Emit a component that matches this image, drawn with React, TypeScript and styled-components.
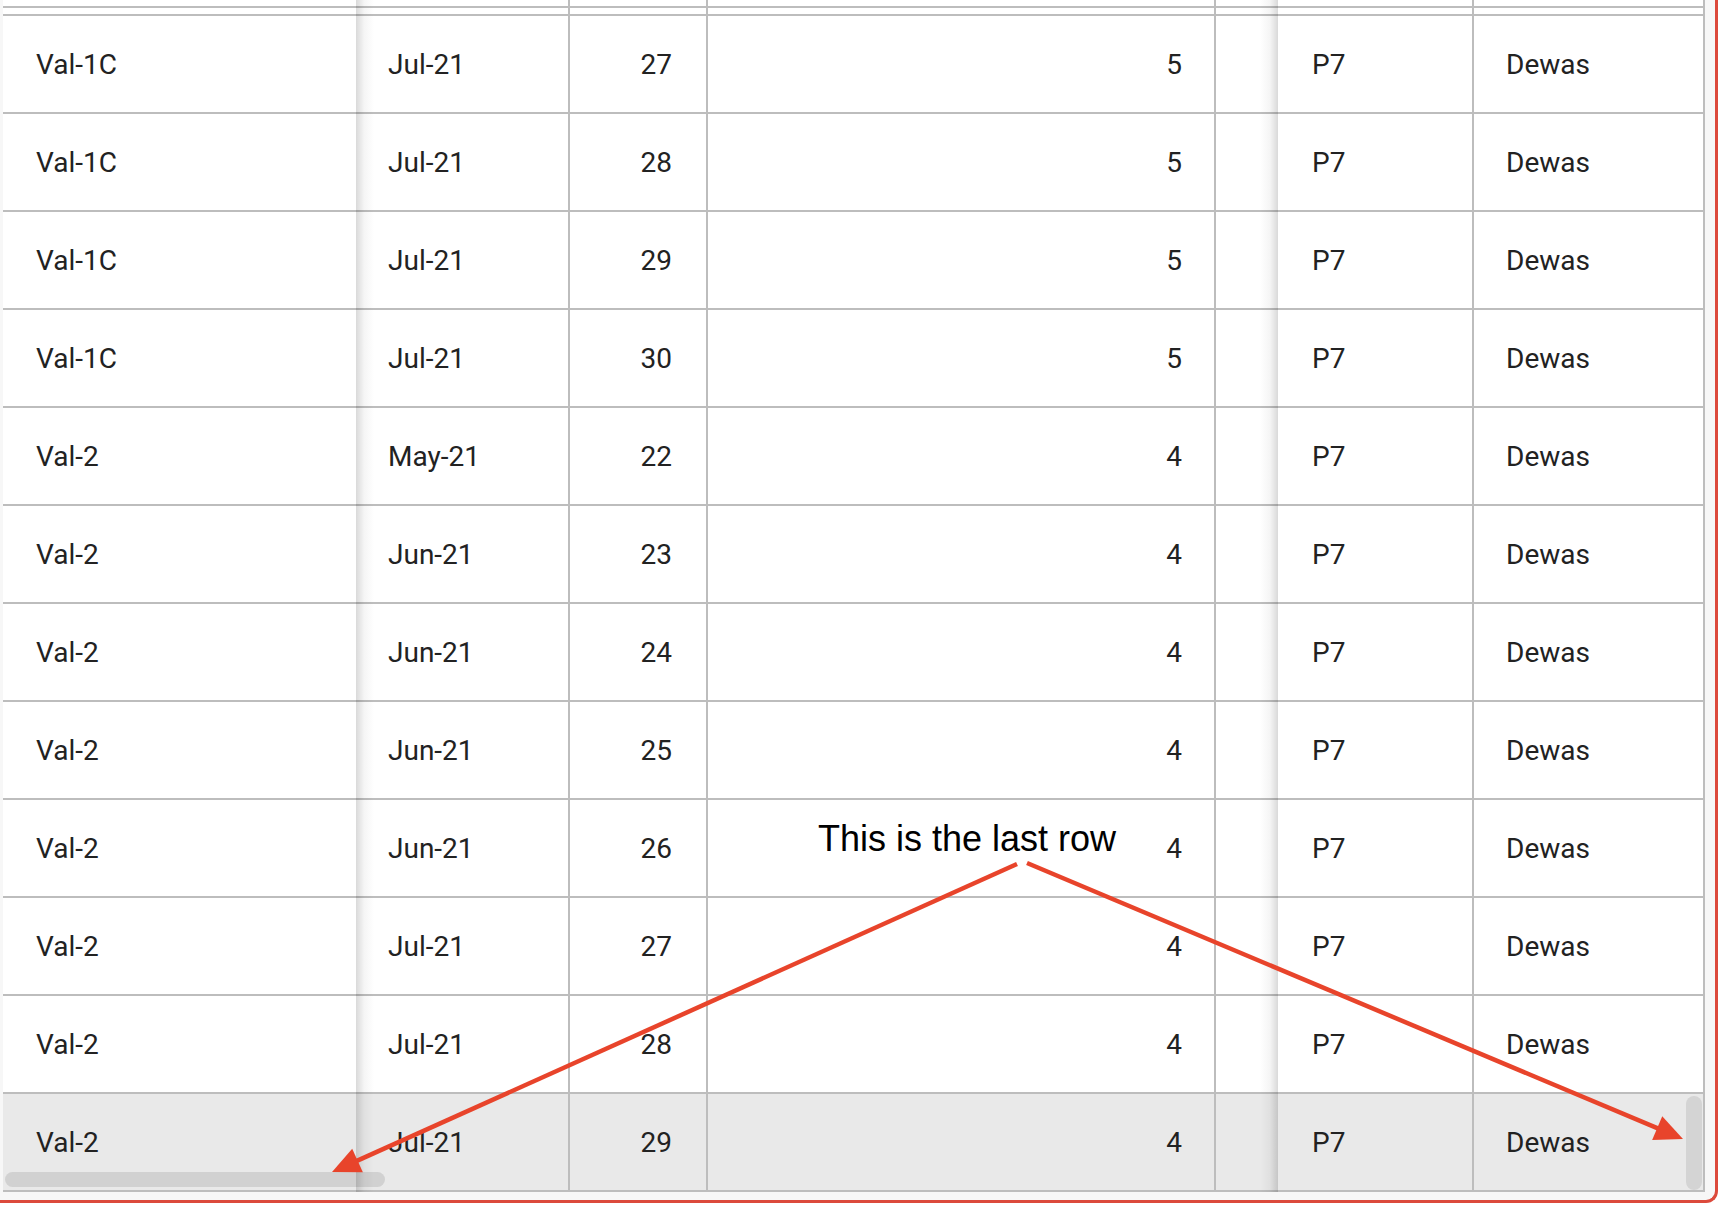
import React from 'react';
import styled, { createGlobalStyle, css } from 'styled-components';

const GlobalStyle = createGlobalStyle`
  html, body {
    margin: 0;
    padding: 0;
    background: #ffffff;
  }
  body {
    font-family: Roboto, "Noto Sans", sans-serif;
  }
`;

const LINE = '#bdbdbd';

const Page = styled.div`
  position: relative;
  width: 1720px;
  height: 1206px;
  overflow: hidden;
`;

const Frame = styled.div`
  width: 1718px;
  height: 1203px;
  box-sizing: border-box;
  padding: 0 10px 8px 3px;
  background: #f7f7f7;
  border-right: 3px solid #dc4a3c;
  border-bottom: 3px solid #dc4a3c;
  border-bottom-right-radius: 12px;
  overflow: hidden;
`;

const Grid = styled.div`
  position: relative;
  display: flex;
  width: 1702px;
  height: 1192px;
  box-sizing: border-box;
  border-right: 2px solid ${LINE};
  background: #ffffff;
  overflow: hidden;
  font-family: Roboto, "Noto Sans", sans-serif;
  font-size: 28px;
  color: #222222;
`;

const Section = styled.div<{ $width: number; $pin?: 'left' | 'right' }>`
  position: relative;
  flex: 0 0 ${({ $width }) => $width}px;
  display: flex;
  flex-direction: column;
  z-index: ${({ $pin }) => ($pin ? 2 : 1)};

  ${({ $pin }) =>
    $pin === 'left' &&
    css`
      &::after {
        content: '';
        position: absolute;
        top: 0;
        bottom: 0;
        right: -18px;
        width: 18px;
        background: linear-gradient(to right, rgba(0, 0, 0, 0.15), rgba(0, 0, 0, 0.04) 45%, rgba(0, 0, 0, 0));
        pointer-events: none;
      }
    `}

  ${({ $pin }) =>
    $pin === 'right' &&
    css`
      &::before {
        content: '';
        position: absolute;
        top: 0;
        bottom: 0;
        left: -18px;
        width: 18px;
        background: linear-gradient(to left, rgba(0, 0, 0, 0.15), rgba(0, 0, 0, 0.04) 45%, rgba(0, 0, 0, 0));
        pointer-events: none;
      }
    `}
`;

const Row = styled.div<{ $height: number; $hover?: boolean }>`
  display: flex;
  flex: 0 0 ${({ $height }) => $height}px;
  box-sizing: border-box;
  border-bottom: 2px solid ${LINE};
  background: ${({ $hover }) => ($hover ? '#e9e9e9' : '#ffffff')};
`;

const Cell = styled.div<{
  $width: number;
  $align: 'left' | 'right';
  $divider?: boolean;
  $pad: number;
}>`
  flex: 0 0 ${({ $width }) => $width}px;
  box-sizing: border-box;
  display: flex;
  align-items: center;
  justify-content: ${({ $align }) => ($align === 'right' ? 'flex-end' : 'flex-start')};
  padding: ${({ $align, $pad }) => ($align === 'right' ? `0 ${$pad}px 0 0` : `0 0 0 ${$pad}px`)};
  border-right: ${({ $divider }) => ($divider ? `2px solid ${LINE}` : 'none')};
  white-space: nowrap;
  overflow: hidden;
`;

const HScrollThumb = styled.div`
  position: absolute;
  left: 2px;
  bottom: 5px;
  width: 380px;
  height: 15px;
  border-radius: 8px;
  background: rgba(0, 0, 0, 0.1);
  z-index: 3;
`;

const VScrollThumb = styled.div`
  position: absolute;
  right: 1px;
  bottom: 2px;
  width: 16px;
  height: 94px;
  border-radius: 8px;
  background: rgba(0, 0, 0, 0.09);
  z-index: 3;
`;

const Note = styled.div`
  position: absolute;
  left: 818px;
  top: 821px;
  font-family: "Liberation Sans", Arial, sans-serif;
  font-size: 36px;
  line-height: 1;
  color: #000000;
  white-space: nowrap;
  z-index: 5;
`;

const Arrows = styled.svg`
  position: absolute;
  left: 0;
  top: 0;
  z-index: 6;
  pointer-events: none;
`;

type Key = 'name' | 'month' | 'day' | 'qty' | 'blank' | 'plant' | 'city';

interface Column {
  key: Key;
  width: number;
  align: 'left' | 'right';
  pad: number;
  divider?: boolean;
}

const leftColumns: Column[] = [{ key: 'name', width: 353, align: 'left', pad: 33 }];

const centerColumns: Column[] = [
  { key: 'month', width: 214, align: 'left', pad: 32, divider: true },
  { key: 'day', width: 138, align: 'right', pad: 34, divider: true },
  { key: 'qty', width: 508, align: 'right', pad: 32, divider: true },
  { key: 'blank', width: 62, align: 'left', pad: 0 }
];

const rightColumns: Column[] = [
  { key: 'plant', width: 196, align: 'left', pad: 34, divider: true },
  { key: 'city', width: 229, align: 'left', pad: 32 }
];

type RowData = Record<Key, string>;

const make = (name: string, month: string, day: number, qty: number): RowData => ({
  name,
  month,
  day: String(day),
  qty: String(qty),
  blank: '',
  plant: 'P7',
  city: 'Dewas'
});

const rows: RowData[] = [
  make('Val-1C', 'Jul-21', 27, 5),
  make('Val-1C', 'Jul-21', 28, 5),
  make('Val-1C', 'Jul-21', 29, 5),
  make('Val-1C', 'Jul-21', 30, 5),
  make('Val-2', 'May-21', 22, 4),
  make('Val-2', 'Jun-21', 23, 4),
  make('Val-2', 'Jun-21', 24, 4),
  make('Val-2', 'Jun-21', 25, 4),
  make('Val-2', 'Jun-21', 26, 4),
  make('Val-2', 'Jul-21', 27, 4),
  make('Val-2', 'Jul-21', 28, 4),
  make('Val-2', 'Jul-21', 29, 4)
];

function GridSection({
  columns,
  width,
  pin
}: {
  columns: Column[];
  width: number;
  pin?: 'left' | 'right';
}) {
  const empty = (h: number, id: string) => (
    <Row $height={h} key={id}>
      {columns.map((c) => (
        <Cell key={c.key} $width={c.width} $align={c.align} $pad={c.pad} $divider={c.divider} />
      ))}
    </Row>
  );

  return (
    <Section $width={width} $pin={pin}>
      {empty(8, 'header')}
      {empty(8, 'spacer')}
      {rows.map((r, i) => (
        <Row $height={98} key={i} $hover={i === rows.length - 1}>
          {columns.map((c) => (
            <Cell key={c.key} $width={c.width} $align={c.align} $pad={c.pad} $divider={c.divider}>
              {r[c.key]}
            </Cell>
          ))}
        </Row>
      ))}
    </Section>
  );
}

// arrow from a start point to a tip, with a filled triangular head
function Arrow({ x1, y1, x2, y2 }: { x1: number; y1: number; x2: number; y2: number }) {
  const dx = x2 - x1;
  const dy = y2 - y1;
  const len = Math.hypot(dx, dy);
  const ux = dx / len;
  const uy = dy / len;
  const head = 28;
  const half = 13;
  const bx = x2 - ux * head;
  const by = y2 - uy * head;
  const nx = -uy;
  const ny = ux;
  const pts = `${x2},${y2} ${bx + nx * half},${by + ny * half} ${bx - nx * half},${by - ny * half}`;
  return (
    <g fill="#e8442b" stroke="#e8442b">
      <line x1={x1} y1={y1} x2={bx + ux * 2} y2={by + uy * 2} strokeWidth={4.5} />
      <polygon points={pts} stroke="none" />
    </g>
  );
}

export default function App() {
  return (
    <Page>
      <GlobalStyle />
      <Frame>
        <Grid>
          <GridSection columns={leftColumns} width={353} pin="left" />
          <GridSection columns={centerColumns} width={922} />
          <GridSection columns={rightColumns} width={425} pin="right" />
          <HScrollThumb />
          <VScrollThumb />
        </Grid>
      </Frame>
      <Note>This is the last row</Note>
      <Arrows width={1720} height={1206} viewBox="0 0 1720 1206">
        <Arrow x1={1017} y1={864} x2={332} y2={1172} />
        <Arrow x1={1027} y1={863} x2={1683} y2={1139} />
      </Arrows>
    </Page>
  );
}
